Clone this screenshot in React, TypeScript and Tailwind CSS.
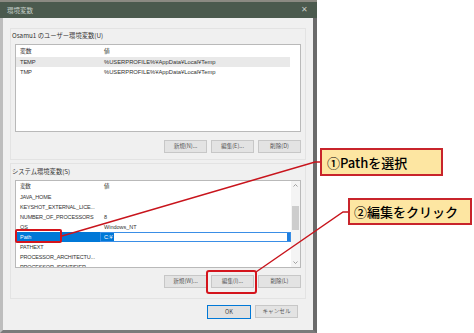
import React from "react";

const ui = { fontFamily: '"Liberation Sans", "Noto Sans CJK JP", sans-serif' };
const jp = { fontFamily: '"Noto Sans CJK JP", "Liberation Sans", sans-serif' };

function Btn({ label, primary }: { label: string; primary?: boolean }) {
  return (
    <div
      className={
        primary
          ? "w-[44px] h-[14px] flex items-center justify-center border border-[#0078d7] bg-[#e1e1e1] text-[5.6px] text-[#444]"
          : "w-[43px] h-[13px] flex items-center justify-center border border-[#c7c7c7] bg-[#e3e3e3] text-[5.6px] text-[#555]"
      }
      style={jp}
    >
      {label}
    </div>
  );
}

function Row({ a, b, h = "h-[10px]", cls = "" }: { a: string; b: string; h?: string; cls?: string }) {
  return (
    <div className={`flex items-center ${h} ${cls}`}>
      <div className="w-[84px] shrink-0 pl-[4px] whitespace-nowrap tracking-[-0.15px]">{a}</div>
      <div className="pl-[4px] whitespace-nowrap">{b}</div>
    </div>
  );
}

export default function App() {
  return (
    <div className="relative w-[474px] h-[333px] bg-white overflow-hidden" style={ui}>
      <div className="flex flex-col w-[317px] h-[333px]">
        {/* title bar */}
        <div className="h-[18px] bg-[#4b5a4e] border-t-[2px] border-[#8b8a82] flex items-center justify-between pl-[7px] pr-[9px]">
          <span className="text-[6.5px] text-[#c9d2cb] leading-none" style={jp}>環境変数</span>
          <span className="text-[8px] text-[#c4cbc5] leading-none">✕</span>
        </div>
        {/* body */}
        <div className="flex-1 flex flex-col bg-[#f0f0f0] border-l-[3px] border-l-[#bdbdbd] border-r-[4px] border-r-[#6a6a6a] border-b-[3px] border-b-[#7a7a7a]">
          {/* user group */}
          <div className="mt-[10px] ml-[7px] w-[296px] h-[132px] border border-[#e3e3e3] px-[4px] pt-[2px] flex flex-col">
            <div className="h-[9px] -ml-[3px] flex items-center text-[6.3px] text-[#333]" style={jp}>Osamu1 のユーザー環境変数(U)</div>
            <div className="mt-[4px] h-[88px] w-[286px] border border-[#b9b9b9] bg-white text-[5.8px] text-[#333]">
              <div className="w-[274px]">
                <Row a="変数" b="値" h="h-[12px]" />
                <Row a="TEMP" b="%USERPROFILE%¥AppData¥Local¥Temp" cls="bg-[#e9e9e9]" />
                <Row a="TMP" b="%USERPROFILE%¥AppData¥Local¥Temp" />
              </div>
            </div>
            <div className="mt-[8px] flex justify-end gap-[4px]">
              <Btn label="新規(N)..." />
              <Btn label="編集(E)..." />
              <Btn label="削除(D)" />
            </div>
          </div>
          {/* system group */}
          <div className="mt-[3px] ml-[7px] w-[296px] h-[136px] border border-[#e3e3e3] px-[4px] pt-[3px] flex flex-col">
            <div className="h-[9px] -ml-[3px] flex items-center text-[6.3px] text-[#333]" style={jp}>システム環境変数(S)</div>
            <div className="mt-[4px] h-[88px] w-[286px] border border-[#b9b9b9] bg-white text-[5.5px] text-[#333] flex overflow-hidden">
              <div className="w-[275px] overflow-hidden">
                <Row a="変数" b="値" h="h-[11px]" />
                <Row a="JAVA_HOME" b="" />
                <Row a="KEYSHOT_EXTERNAL_LICE..." b="" />
                <Row a="NUMBER_OF_PROCESSORS" b="8" />
                <Row a="OS" b="Windows_NT" />
                <div className="flex items-stretch h-[10px]">
                  <div className="w-[84px] pl-[4px] bg-[#0078d7] text-white flex items-center">Path</div>
                  <div className="flex-1 flex items-center border border-[#3a8ee6] bg-white">
                    <span className="h-full flex items-center bg-[#0078d7] text-white pl-[3px] pr-[1px]">C:¥</span>
                    <div className="flex-1" />
                    <div className="w-[3px] h-full bg-[#1e7fe0]" />
                  </div>
                </div>
                <Row a="PATHEXT" b="" />
                <Row a="PROCESSOR_ARCHITECTU..." b="" />
                <Row a="PROCESSOR_IDENTIFIER" b="" />
              </div>
              <div className="w-[9px] flex flex-col bg-[#f4f4f4]">
                <div className="h-[9px] flex items-center justify-center">
                  <svg width="5" height="3" viewBox="0 0 5 3"><path d="M0.5 2.5 L2.5 0.5 L4.5 2.5" stroke="#8a8a8a" strokeWidth="0.8" fill="none" /></svg>
                </div>
                <div className="flex-1 px-[1px] pt-[16px]">
                  <div className="h-[24px] bg-[#cdcdcd]" />
                </div>
                <div className="h-[9px] flex items-center justify-center">
                  <svg width="5" height="3" viewBox="0 0 5 3"><path d="M0.5 0.5 L2.5 2.5 L4.5 0.5" stroke="#8a8a8a" strokeWidth="0.8" fill="none" /></svg>
                </div>
              </div>
            </div>
            <div className="mt-[7px] flex justify-end gap-[4px]">
              <Btn label="新規(W)..." />
              <Btn label="編集(I)..." />
              <Btn label="削除(L)" />
            </div>
          </div>
          <div className="mt-[6px] ml-[204px] flex gap-[4px]">
            <Btn label="OK" primary />
            <Btn label="キャンセル" />
          </div>
        </div>
      </div>

      {/* red highlight boxes */}
      <div className="absolute left-[15px] top-[229px] w-[47px] h-[14px] border-2 border-[#d4141c] rounded-[2px]" />
      <div className="absolute left-[206px] top-[270px] w-[51px] h-[24px] border-2 border-[#d4141c] rounded-[3px]" />

      {/* connector lines */}
      <svg className="absolute inset-0 pointer-events-none" width="474" height="333" viewBox="0 0 474 333">
        <polyline points="321,162 315,162 62,236" fill="none" stroke="#c8141c" strokeWidth="1.4" />
        <polyline points="349,212 343,212 256,272" fill="none" stroke="#c8141c" strokeWidth="1.4" />
      </svg>

      {/* annotation boxes */}
      <div className="absolute left-[320px] top-[148px] w-[123px] h-[28px] bg-[#fde6a2] border-2 border-[#c8242b] flex items-center pl-[5px] text-[13px] text-black font-medium leading-none" style={jp}>
        ①Pathを選択
      </div>
      <div className="absolute left-[348px] top-[198px] w-[124px] h-[27px] bg-[#fde6a2] border-2 border-[#c8242b] flex items-center pl-[4px] text-[13px] text-black font-medium leading-none" style={jp}>
        ②編集をクリック
      </div>
    </div>
  );
}
